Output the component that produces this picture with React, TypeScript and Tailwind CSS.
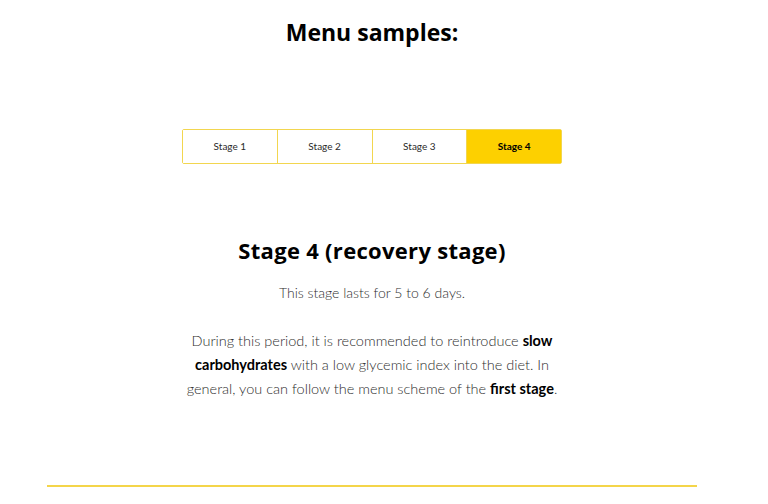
import React, { useState } from 'react';

const stages = ['Stage 1', 'Stage 2', 'Stage 3', 'Stage 4'];

const App: React.FC = () => {
  const [active, setActive] = useState(3);

  return (
    <div className="min-h-[504px] bg-white font-['Lato','Liberation_Sans',sans-serif] text-[#1a1a1a]">
      <div className="w-[744px] flex flex-col items-center">
        <h2 className="mt-[17px] font-['Open_Sans',sans-serif] text-[23px] leading-[30px] font-bold text-black">
          Menu samples:
        </h2>

        {/* Stage tabs */}
        <div className="mt-[82px] flex w-[380px] h-[35px] border border-[#f2d64f] rounded-[2px]">
          {stages.map((s, i) => (
            <button
              key={s}
              onClick={() => setActive(i)}
              className={`flex-1 text-[10px] ${i > 0 ? 'border-l border-[#f2d64f]' : ''} ${
                active === i ? 'bg-[#fdd000] font-bold text-black' : 'bg-white font-normal text-[#2a2a2a]'
              }`}
            >
              {s}
            </button>
          ))}
        </div>

        <h3 className="mt-[71px] font-['Open_Sans',sans-serif] text-[22px] leading-[30px] font-bold tracking-[0.3px] text-black">
          Stage 4 (recovery stage)
        </h3>
        <p className="mt-[17px] text-[14px] font-light text-[#2e2e2e]">This stage lasts for 5 to 6 days.</p>

        <p className="mt-[26px] w-[380px] text-center text-[14.5px] leading-[24px] font-light text-[#2e2e2e]">
          During this period, it is recommended to reintroduce <b className="font-bold text-black">slow</b>{' '}
          <b className="font-bold text-black">carbohydrates</b> with a low glycemic index into the diet. In general,
          you can follow the menu scheme of the <b className="font-bold text-black">first stage</b>.
        </p>

        <div className="mt-[84px] w-[650px] h-[2px] bg-[#f4d54a]" />
      </div>
    </div>
  );
};

export default App;
